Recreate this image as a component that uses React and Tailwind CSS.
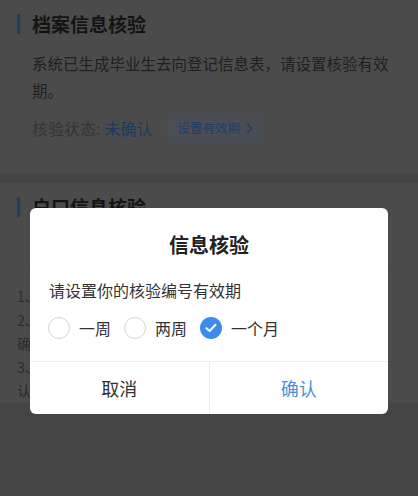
import React from "react";

const font = { fontFamily: '"Noto Sans CJK SC", "Noto Sans", sans-serif' };

function Radio({ checked }) {
  if (checked) {
    return (
      <span className="flex h-[22px] w-[22px] shrink-0 items-center justify-center rounded-full bg-[#3b8cef]">
        <svg width="12" height="10" viewBox="0 0 12 10" fill="none">
          <path d="M1.5 5.2 L4.6 8 L10.5 1.8" stroke="white" strokeWidth="2" strokeLinecap="round" strokeLinejoin="round" />
        </svg>
      </span>
    );
  }
  return <span className="block h-[22px] w-[22px] shrink-0 rounded-full border border-[#d4d4d4] bg-white" />;
}

export default function App() {
  return (
    <div className="relative h-[496px] w-[418px] overflow-hidden bg-[#454545]" style={font}>
      {/* card 1 */}
      <div className="h-[173px] bg-[#4b4b4b] pt-[13px]">
        <div className="flex items-center">
          <div className="ml-[17px] h-[20px] w-[3px] bg-[#1c3e6b]" />
          <div className="ml-[12px] text-[19px] font-bold leading-[22px] text-[#141414]">档案信息核验</div>
        </div>
        <div className="ml-[32px] mt-[15px] w-[362px] text-[15.5px] leading-[27px] text-[#1f1f1f]">
          系统已生成毕业生去向登记信息表，请设置核验有效期。
        </div>
        <div className="ml-[32px] mt-[9px] flex items-center">
          <span className="text-[16px] text-[#353535]">核验状态:</span>
          <span className="ml-[4px] text-[16px] text-[#1d3b60]">未确认</span>
          <span className="ml-[15px] flex h-[30px] items-center rounded-[2px] bg-[#4a4e54] px-[10px] text-[12.5px] text-[#223e63]">
            设置有效期
            <svg className="ml-[6px]" width="7" height="11" viewBox="0 0 7 11" fill="none">
              <path d="M1.2 1 L5.6 5.5 L1.2 10" stroke="#223e63" strokeWidth="1.4" />
            </svg>
          </span>
        </div>
      </div>
      {/* card 2 */}
      <div className="mt-[10px] bg-[#4b4b4b]">
        <div className="flex items-center border-b border-[#474747] pt-[13px] pb-[50px]">
          <div className="ml-[17px] h-[20px] w-[3px] bg-[#1c3e6b]" />
          <div className="ml-[12px] text-[19px] font-bold leading-[22px] text-[#141414]">户口信息核验</div>
        </div>
        <div className="px-[17px] pt-[16px] text-[14px] leading-[23.5px] text-[#2c2c2c]">
          <div>1、毕业生户口信息核验需要在规定时间内完成。</div>
          <div>2、核验编号有效期内，请毕业生及时登录系统进行信息确</div>
          <div>确认，逾期需重新申请。</div>
          <div>3、如信息有误，请联系学校相关部门进行修改后再次确</div>
          <div>认。</div>
        </div>
      </div>

      {/* dialog */}
      <div className="absolute left-[30px] top-[208px] w-[358px] overflow-hidden rounded-[6px] bg-white">
        <div className="pt-[24px] text-center text-[20px] font-bold leading-[26px] text-[#222]">信息核验</div>
        <div className="ml-[19px] mt-[21px] text-[16px] leading-[22px] text-[#333]">请设置你的核验编号有效期</div>
        <div className="ml-[18px] mt-[16px] flex items-center text-[16px] leading-[22px] text-[#333]">
          <Radio />
          <span className="ml-[9px]">一周</span>
          <span className="ml-[13px]"><Radio /></span>
          <span className="ml-[9px]">两周</span>
          <span className="ml-[13px]"><Radio checked /></span>
          <span className="ml-[9px]">一个月</span>
        </div>
        <div className="mt-[22px] flex h-[53px] border-t border-[#eeeeee]">
          <div className="flex flex-1 items-center justify-center border-r border-[#eeeeee] text-[18px] text-[#333]">取消</div>
          <div className="flex flex-1 items-center justify-center text-[18px] text-[#4a90d9]">确认</div>
        </div>
      </div>
    </div>
  );
}
